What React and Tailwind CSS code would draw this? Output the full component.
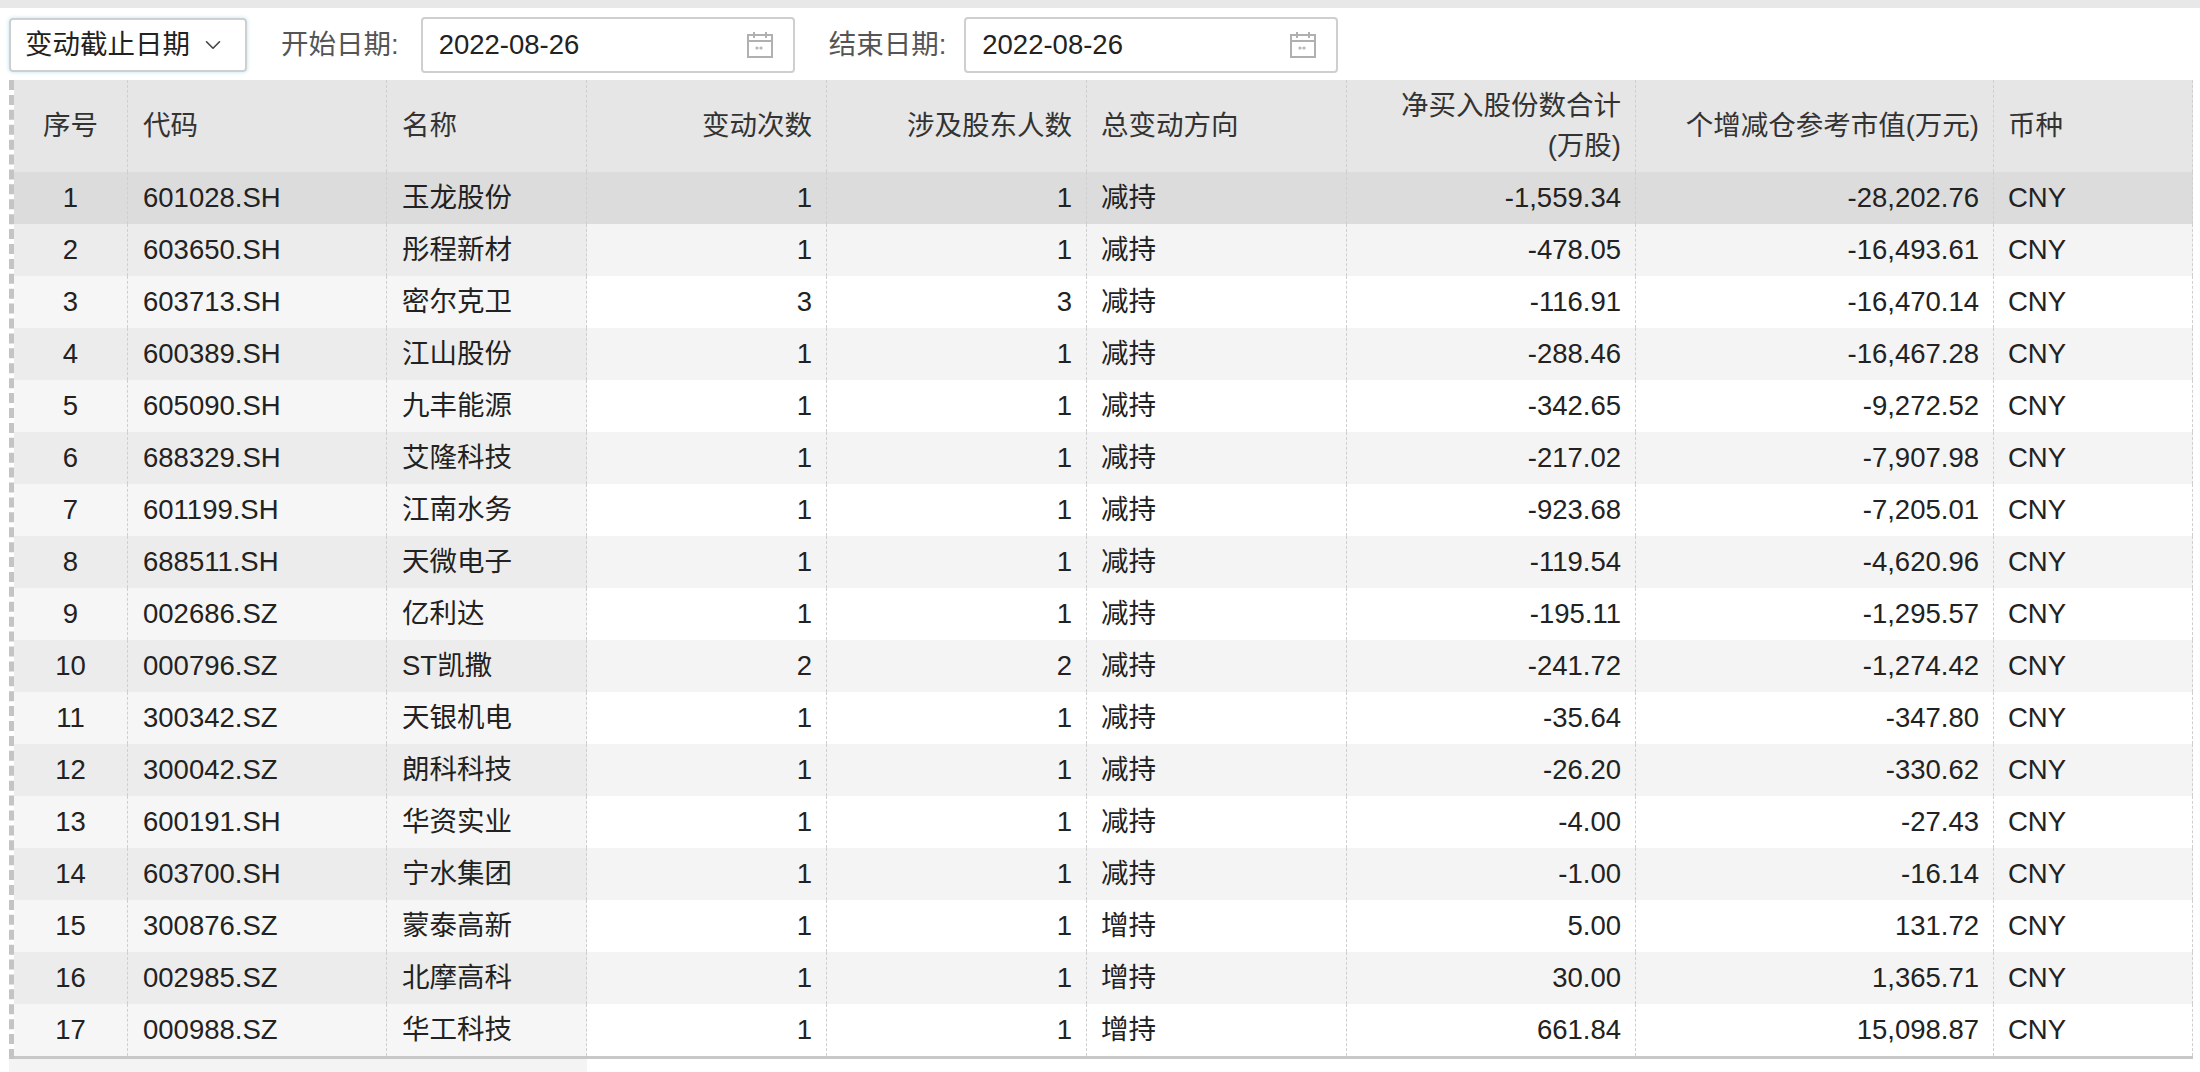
import React from 'react';
import { ChevronDown } from 'lucide-react';

const rows = [
  ['601028.SH', '玉龙股份', 1, 1, '减持', '-1,559.34', '-28,202.76'],
  ['603650.SH', '彤程新材', 1, 1, '减持', '-478.05', '-16,493.61'],
  ['603713.SH', '密尔克卫', 3, 3, '减持', '-116.91', '-16,470.14'],
  ['600389.SH', '江山股份', 1, 1, '减持', '-288.46', '-16,467.28'],
  ['605090.SH', '九丰能源', 1, 1, '减持', '-342.65', '-9,272.52'],
  ['688329.SH', '艾隆科技', 1, 1, '减持', '-217.02', '-7,907.98'],
  ['601199.SH', '江南水务', 1, 1, '减持', '-923.68', '-7,205.01'],
  ['688511.SH', '天微电子', 1, 1, '减持', '-119.54', '-4,620.96'],
  ['002686.SZ', '亿利达', 1, 1, '减持', '-195.11', '-1,295.57'],
  ['000796.SZ', 'ST凯撒', 2, 2, '减持', '-241.72', '-1,274.42'],
  ['300342.SZ', '天银机电', 1, 1, '减持', '-35.64', '-347.80'],
  ['300042.SZ', '朗科科技', 1, 1, '减持', '-26.20', '-330.62'],
  ['600191.SH', '华资实业', 1, 1, '减持', '-4.00', '-27.43'],
  ['603700.SH', '宁水集团', 1, 1, '减持', '-1.00', '-16.14'],
  ['300876.SZ', '蒙泰高新', 1, 1, '增持', '5.00', '131.72'],
  ['002985.SZ', '北摩高科', 1, 1, '增持', '30.00', '1,365.71'],
  ['000988.SZ', '华工科技', 1, 1, '增持', '661.84', '15,098.87'],
];

const cols = 'grid grid-cols-[114px_259px_200px_240px_260px_260px_289px_358px_199px]';
const cell = 'border-r border-dashed border-[#cfcfcf] flex items-center';

function CalendarIcon() {
  return (
    <svg width="30" height="30" viewBox="0 0 30 30" fill="none" stroke="#b0b0b0" strokeWidth="2">
      <rect x="3" y="5" width="24" height="22" />
      <line x1="3" y1="11" x2="27" y2="11" />
      <line x1="9" y1="2" x2="9" y2="8" />
      <line x1="21" y1="2" x2="21" y2="8" />
      <line x1="12" y1="5" x2="18" y2="5" />
      <circle cx="12" cy="18" r="0.6" fill="#b0b0b0" />
      <circle cx="16" cy="18" r="0.6" fill="#b0b0b0" />
    </svg>
  );
}

function DateInput({ value }) {
  return (
    <div className="w-[374px] h-[56px] border-2 border-[#cfcfcf] rounded-[4px] flex items-center justify-between pl-[16px] pr-[18px]">
      <span className="text-[#222]">{value}</span>
      <CalendarIcon />
    </div>
  );
}

export default function App() {
  return (
    <div className="w-[2200px] h-[1072px] bg-white text-[27.5px] text-[#222] overflow-hidden" style={{ fontFamily: '"Liberation Sans", "Noto Sans CJK SC", sans-serif' }}>
      <div className="h-[8px] bg-[#e8e8e8]" />
      {/* 筛选栏 */}
      <div className="flex items-center h-[64px] mt-[5px] pl-[9px]">
        <div className="w-[238px] h-[54px] border-2 border-[#cfcfcf] rounded-[4px] shadow-[0_0_4px_#bde3f0] flex items-center px-[14px] gap-[10px]">
          <span>变动截止日期</span>
          <ChevronDown className="w-[26px] h-[26px] text-[#444]" strokeWidth={1.5} />
        </div>
        <span className="ml-[34px] mr-[22px] text-[#555]">开始日期:</span>
        <DateInput value="2022-08-26" />
        <span className="ml-[34px] mr-[18px] text-[#555]">结束日期:</span>
        <DateInput value="2022-08-26" />
      </div>
      {/* 表格 */}
      <div className="ml-[9px] mt-[3px] border-l-[5px] border-dashed border-[#c4c4c4] w-[2184px]">
        <div className={`${cols} h-[92px] bg-[#e6e6e6] text-[#333]`}>
          <div className={`${cell} justify-center`}>序号</div>
          <div className={`${cell} pl-[15px]`}>代码</div>
          <div className={`${cell} pl-[15px]`}>名称</div>
          <div className={`${cell} justify-end pr-[14px]`}>变动次数</div>
          <div className={`${cell} justify-end pr-[14px]`}>涉及股东人数</div>
          <div className={`${cell} pl-[14px]`}>总变动方向</div>
          <div className={`${cell} justify-end pr-[14px] text-right leading-[40px]`}>净买入股份数合计<br />(万股)</div>
          <div className={`${cell} justify-end pr-[14px]`}>个增减仓参考市值(万元)</div>
          <div className={`${cell} pl-[14px]`}>币种</div>
        </div>
        {rows.map((r, i) => {
          const bg = i === 0 ? 'bg-[#dcdcdc]' : i % 2 === 1 ? 'bg-[#f4f4f4]' : 'bg-white';
          const fz = i === 0 ? 'bg-[#dcdcdc]' : i % 2 === 1 ? 'bg-[#ececec]' : 'bg-[#f6f6f6]';
          return (
            <div key={r[0]} className={`${cols} h-[52px] ${bg}`}>
              <div className={`${cell} ${fz} justify-center`}>{i + 1}</div>
              <div className={`${cell} ${fz} pl-[15px]`}>{r[0]}</div>
              <div className={`${cell} ${fz} pl-[15px]`}>{r[1]}</div>
              <div className={`${cell} justify-end pr-[14px]`}>{r[2]}</div>
              <div className={`${cell} justify-end pr-[14px]`}>{r[3]}</div>
              <div className={`${cell} pl-[14px]`}>{r[4]}</div>
              <div className={`${cell} justify-end pr-[14px]`}>{r[5]}</div>
              <div className={`${cell} justify-end pr-[14px]`}>{r[6]}</div>
              <div className={`${cell} pl-[14px]`}>CNY</div>
            </div>
          );
        })}
        <div className="h-[3px] bg-[#c8c8c8]" />
      </div>
      <div className="ml-[9px] w-[578px] h-[20px] bg-[#f4f4f4]" />
    </div>
  );
}
